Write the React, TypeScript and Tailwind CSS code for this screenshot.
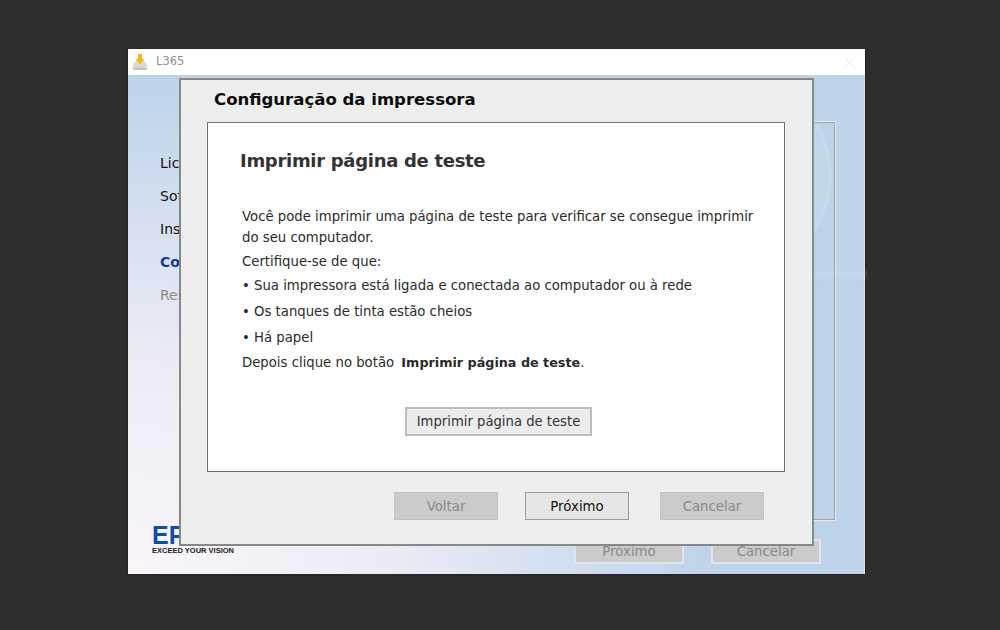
import React from "react";

const font = "font-['DejaVu_Sans',sans-serif]";

function BackItem({ label, cls }: { label: string; cls: string }) {
  return <div className={`h-[33px] leading-[33px] text-[14px] ${cls}`}>{label}</div>;
}

function DialogButton({ label, enabled }: { label: string; enabled?: boolean }) {
  return (
    <div
      className={
        "w-[104px] h-[28px] pt-[1px] flex items-center justify-center text-[13.3px] border " +
        (enabled
          ? "bg-[#e6e6e6] border-[#9a9a9a] text-[#111111]"
          : "bg-[#cbcbcb] border-[#c2c2c2] text-[#8a8a8a]")
      }
    >
      {label}
    </div>
  );
}

export default function App() {
  return (
    <div className={`w-[1000px] h-[630px] overflow-hidden bg-[#2e2e2e] pt-[49px] pl-[128px] ${font}`}>
      <div className="relative w-[737px] h-[525px] flex flex-col shadow-[0_0_2px_#111111]">
        {/* Title bar */}
        <div className="h-[26px] bg-white flex items-center shrink-0">
          <svg width="16" height="18" viewBox="0 0 16 18" className="ml-[4px]">
            <path d="M1 17v-2.500C1 10 4 7.500 8 7.500s7 2.500 7 7V17z" fill="#dcd8cc" />
            <path d="M1 14.500h14V17H1z" fill="#c9c5ba" />
            <path d="M6 1h4v5h2.800L8 11.500 3.200 6H6z" fill="#f6b91c" />
          </svg>
          <span className="ml-[8px] text-[11.5px] text-[#8f8f8f]">L365</span>
          <svg width="13" height="13" viewBox="0 0 13 13" className="ml-auto mr-[9px]">
            <path d="M1 1l11 11M12 1L1 12" stroke="#e6e6e6" strokeWidth="1" fill="none" />
          </svg>
        </div>

        {/* Background window body */}
        <div className="relative flex-1 flex flex-col border-r border-[#d5e1ef] bg-[#bdd3e9] bg-[radial-gradient(ellipse_80%_100%_at_0%_100%,#faf6fa_0%,#eeedf6_40%,#d4e0f0_72%,#bdd3e9_100%)]">
          <div className="absolute left-[686px] right-0 top-[196px] h-[6px] bg-[#c4d7ea] blur-[2px]" />
          <div className="relative flex flex-1 pt-[47px]">
            <div className="w-[190px] pl-[32px] pt-[25px] shrink-0">
              <BackItem label="Licença" cls="text-[#111111]" />
              <BackItem label="Software" cls="text-[#111111]" />
              <BackItem label="Instalação" cls="text-[#111111]" />
              <BackItem label="Configuração" cls="text-[#0f3d9e] font-bold" />
              <BackItem label="Resultado" cls="text-[#8a8a8a]" />
            </div>
            <div className="relative overflow-hidden w-[517px] h-[398px] border border-[#a3a3a3] outline outline-1 outline-[#e2e9f1]">
              <svg width="515" height="396" viewBox="0 0 515 396" className="absolute left-0 top-0">
                <circle cx="408" cy="52" r="103" fill="#c1d6ea" stroke="#c7daeb" strokeWidth="3" />
              </svg>
            </div>
          </div>
          <div className="relative h-[54px] shrink-0 flex pl-[24px] pr-[43px]">
            <div className="flex flex-col mt-[6px]">
              <div className="font-['Liberation_Sans',sans-serif] font-bold text-[25px] leading-[19px] text-[#0f4ea3]">EPSON</div>
              <div className="font-['Liberation_Sans',sans-serif] font-bold text-[7.5px] leading-[9px] mt-[1px] text-[#1a1a1a] whitespace-nowrap">EXCEED YOUR VISION</div>
            </div>
            <div className="ml-auto flex gap-[27px] mt-[19px] h-[25px]">
              <div className="w-[110px] h-[25px] flex items-center justify-center text-[13.3px] bg-[#cbcbcb] border-2 border-[#e2e6ec] text-[#8a8a8a]">Próximo</div>
              <div className="w-[110px] h-[25px] flex items-center justify-center text-[13.3px] bg-[#cbcbcb] border-2 border-[#e2e6ec] text-[#8a8a8a]">Cancelar</div>
            </div>
          </div>
        </div>

        {/* Modal dialog */}
        <div className="absolute left-[51px] top-[29px] w-[635px] h-[468px] bg-[#eeeeee] border-2 border-[#888888] flex flex-col pl-[26px] pr-[27px]">
          <div className="h-[42px] pl-[7px] pb-[1px] flex items-center text-[16.55px] font-bold text-[#0c0c0c] shrink-0">
            Configuração da impressora
          </div>
          <div className="h-[350px] bg-white border border-[#6f6f6f] pl-[32px] pr-[30px] flex flex-col shrink-0">
            <div className="mt-[26px] text-[18px] font-bold text-[#333333] tracking-[-0.3px] leading-[24px]">Imprimir página de teste</div>
            <div className="mt-[33px] text-[13.25px] text-[#2a2a2a] leading-[21px] pl-[2px] whitespace-nowrap">
              <p>Você pode imprimir uma página de teste para verificar se consegue imprimir</p>
              <p>do seu computador.</p>
              <p className="mt-[3px]">Certifique-se de que:</p>
              <p className="mt-[3px]">• Sua impressora está ligada e conectada ao computador ou à rede</p>
              <p className="mt-[5px]">• Os tanques de tinta estão cheios</p>
              <p className="mt-[5px]">• Há papel</p>
              <p className="mt-[4px]">Depois clique no botão <b className="ml-[3px] text-[12.75px]">Imprimir página de teste</b>.</p>
            </div>
            <div className="mt-[34px] self-center w-[187px] h-[29px] ml-[3px] flex items-center justify-center text-[13.2px] text-[#333333] bg-[#ececec] border-2 border-[#bdbdbd]">
              Imprimir página de teste
            </div>
          </div>
          <div className="flex pt-[20px] pl-[187px] shrink-0">
            <DialogButton label="Voltar" />
            <div className="w-[27px]" />
            <DialogButton label="Próximo" enabled />
            <div className="w-[31px]" />
            <DialogButton label="Cancelar" />
          </div>
        </div>
      </div>
    </div>
  );
}
